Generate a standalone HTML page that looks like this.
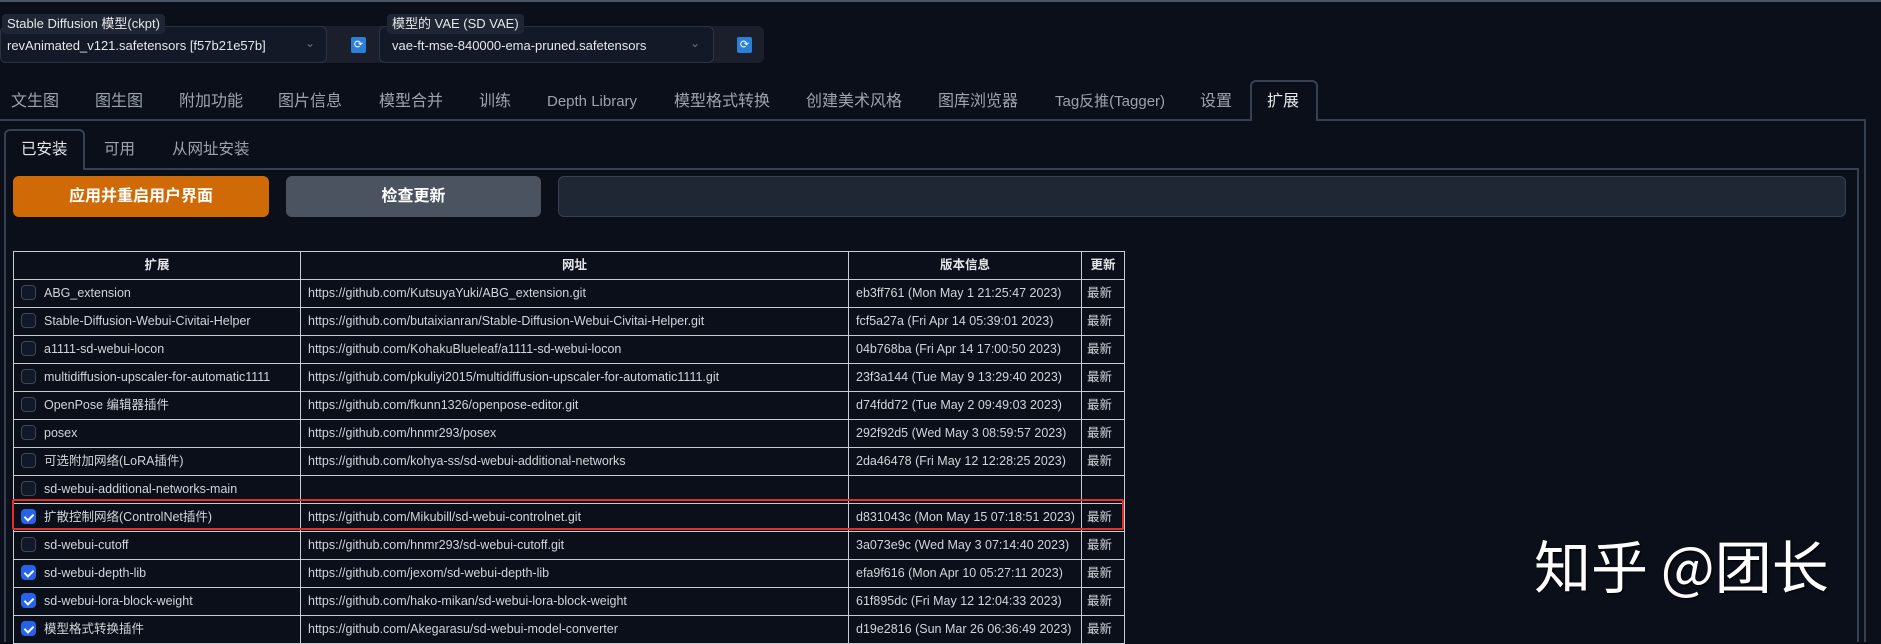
<!DOCTYPE html>
<html><head><meta charset="utf-8"><style>
*{box-sizing:border-box;margin:0;padding:0}
body{width:1881px;height:642px;overflow:hidden;background:#0b0f19;color:#d1d5db;font-family:"Liberation Sans","Noto Sans CJK SC",sans-serif;position:relative}
.a{position:absolute;white-space:nowrap}
.grp{left:0;top:26px;width:764px;height:37px;background:#1a1f2b;border-radius:6px}
.dd{top:26px;height:37px;background:#131926;border:1px solid #2c3444;border-radius:6px;font-size:13px;line-height:37px;padding-left:6px;color:#e5e7eb}
.lbl{font-size:13px;background:#1f2532;border-radius:4px;padding:0 5px;line-height:20px;color:#e5e7eb}
.ref{width:15px;height:16px;background:#2b7fd6;border-radius:2px;top:37px;color:#fff;font-size:11px;text-align:center;line-height:16px}
.chev{color:#6b7280;font-size:12px;top:36px}
.tab{top:91px;height:22px;line-height:22px;font-size:16px;color:#9ca3af}
.st{top:139px;height:22px;line-height:22px;font-size:15.5px;color:#9ca3af}
.btn{top:176px;height:41px;border-radius:6px;font-size:16px;font-weight:bold;color:#fff;text-align:center;line-height:41px}
table{position:absolute;left:13px;top:251px;width:1111px;border-collapse:collapse;table-layout:fixed;font-size:12.5px}
td,th{border:1px solid #c7cbd2;height:28px;padding:0 7px;white-space:nowrap;overflow:hidden;line-height:27px}
th{height:27.6px;font-weight:bold;text-align:center;color:#e5e7eb}
td{color:#d1d5db}
td.u{padding:0 5px}
.cb{display:inline-block;width:15px;height:15px;border:1px solid #3f4755;border-radius:4px;background:#111827;vertical-align:middle;margin-right:8px;position:relative;top:-1px}
.ck{background:#2563eb;border-color:#2563eb}
.ck::after{content:"";position:absolute;left:4px;top:2px;width:4px;height:7px;border:solid #fff;border-width:0 2px 2px 0;transform:rotate(45deg)}
</style></head><body>
<div class="a" style="left:0;top:0;width:1881px;height:2px;background:#4b5563"></div>
<div class="a grp"></div>
<div class="a dd" style="left:0;width:327px">revAnimated_v121.safetensors [f57b21e57b]</div>
<div class="a chev" style="left:305px">&#8964;</div>
<div class="a ref" style="left:351px">&#10227;</div>
<div class="a dd" style="left:379px;width:335px;padding-left:12px">vae-ft-mse-840000-ema-pruned.safetensors</div>
<div class="a chev" style="left:690px">&#8964;</div>
<div class="a ref" style="left:737px">&#10227;</div>
<div class="a lbl" style="left:2px;top:14px">Stable Diffusion 模型(ckpt)</div>
<div class="a lbl" style="left:387px;top:14px">模型的 VAE (SD VAE)</div>

<div class="a tab" style="left:11px">文生图</div>
<div class="a tab" style="left:95px">图生图</div>
<div class="a tab" style="left:179px">附加功能</div>
<div class="a tab" style="left:278px">图片信息</div>
<div class="a tab" style="left:379px">模型合并</div>
<div class="a tab" style="left:479px">训练</div>
<div class="a tab" style="left:547px;font-size:15px">Depth Library</div>
<div class="a tab" style="left:674px">模型格式转换</div>
<div class="a tab" style="left:806px">创建美术风格</div>
<div class="a tab" style="left:938px">图库浏览器</div>
<div class="a tab" style="left:1055px;font-size:15px">Tag反推(Tagger)</div>
<div class="a tab" style="left:1200px">设置</div>
<div class="a" style="left:0;top:119px;width:1866px;height:2px;background:#374151"></div>
<div class="a" style="left:1864px;top:119px;width:2px;height:523px;background:#374151"></div>
<div class="a" style="left:1250px;top:80px;width:68px;height:41px;border:2px solid #374151;border-bottom:none;border-radius:6px 6px 0 0;background:#0b0f19"></div>
<div class="a tab" style="left:1267px;color:#e5e7eb">扩展</div>

<div class="a" style="left:4px;top:168px;width:1855px;height:2px;background:#374151"></div>
<div class="a" style="left:4px;top:168px;width:2px;height:474px;background:#374151"></div>
<div class="a" style="left:1857px;top:168px;width:2px;height:474px;background:#374151"></div>
<div class="a" style="left:4px;top:129px;width:81px;height:41px;border:2px solid #374151;border-bottom:none;border-radius:6px 6px 0 0;background:#0b0f19"></div>
<div class="a st" style="left:21px;color:#e5e7eb">已安装</div>
<div class="a st" style="left:104px">可用</div>
<div class="a st" style="left:172px">从网址安装</div>

<div class="a btn" style="left:13px;width:256px;background:#cf6a07">应用并重启用户界面</div>
<div class="a btn" style="left:286px;width:255px;background:#4b5361">检查更新</div>
<div class="a" style="left:558px;top:176px;width:1288px;height:41px;background:#1f2734;border:1px solid #374151;border-radius:6px"></div>

<table>
<colgroup><col style="width:287px"><col style="width:548px"><col style="width:233px"><col style="width:43px"></colgroup>
<tr><th>扩展</th><th>网址</th><th>版本信息</th><th style="padding:0 4px">更新</th></tr>
<tr><td><span class="cb"></span>ABG_extension</td><td>https://github.com/KutsuyaYuki/ABG_extension.git</td><td>eb3ff761 (Mon May 1 21:25:47 2023)</td><td class="u">最新</td></tr>
<tr><td><span class="cb"></span>Stable-Diffusion-Webui-Civitai-Helper</td><td>https://github.com/butaixianran/Stable-Diffusion-Webui-Civitai-Helper.git</td><td>fcf5a27a (Fri Apr 14 05:39:01 2023)</td><td class="u">最新</td></tr>
<tr><td><span class="cb"></span>a1111-sd-webui-locon</td><td>https://github.com/KohakuBlueleaf/a1111-sd-webui-locon</td><td>04b768ba (Fri Apr 14 17:00:50 2023)</td><td class="u">最新</td></tr>
<tr><td><span class="cb"></span>multidiffusion-upscaler-for-automatic1111</td><td>https://github.com/pkuliyi2015/multidiffusion-upscaler-for-automatic1111.git</td><td>23f3a144 (Tue May 9 13:29:40 2023)</td><td class="u">最新</td></tr>
<tr><td><span class="cb"></span>OpenPose 编辑器插件</td><td>https://github.com/fkunn1326/openpose-editor.git</td><td>d74fdd72 (Tue May 2 09:49:03 2023)</td><td class="u">最新</td></tr>
<tr><td><span class="cb"></span>posex</td><td>https://github.com/hnmr293/posex</td><td>292f92d5 (Wed May 3 08:59:57 2023)</td><td class="u">最新</td></tr>
<tr><td><span class="cb"></span>可选附加网络(LoRA插件)</td><td>https://github.com/kohya-ss/sd-webui-additional-networks</td><td>2da46478 (Fri May 12 12:28:25 2023)</td><td class="u">最新</td></tr>
<tr><td><span class="cb"></span>sd-webui-additional-networks-main</td><td></td><td></td><td></td></tr>
<tr><td><span class="cb ck"></span>扩散控制网络(ControlNet插件)</td><td>https://github.com/Mikubill/sd-webui-controlnet.git</td><td>d831043c (Mon May 15 07:18:51 2023)</td><td class="u">最新</td></tr>
<tr><td><span class="cb"></span>sd-webui-cutoff</td><td>https://github.com/hnmr293/sd-webui-cutoff.git</td><td>3a073e9c (Wed May 3 07:14:40 2023)</td><td class="u">最新</td></tr>
<tr><td><span class="cb ck"></span>sd-webui-depth-lib</td><td>https://github.com/jexom/sd-webui-depth-lib</td><td>efa9f616 (Mon Apr 10 05:27:11 2023)</td><td class="u">最新</td></tr>
<tr><td><span class="cb ck"></span>sd-webui-lora-block-weight</td><td>https://github.com/hako-mikan/sd-webui-lora-block-weight</td><td>61f895dc (Fri May 12 12:04:33 2023)</td><td class="u">最新</td></tr>
<tr><td><span class="cb ck"></span>模型格式转换插件</td><td>https://github.com/Akegarasu/sd-webui-model-converter</td><td>d19e2816 (Sun Mar 26 06:36:49 2023)</td><td class="u">最新</td></tr>
</table>
<div class="a" style="left:12px;top:499px;width:1112px;height:31px;border:2.5px solid #e0302a;border-radius:2px"></div>
<div class="a" style="left:1534px;top:529px;font-size:57px;color:#fff;font-family:'Noto Sans CJK SC',sans-serif;line-height:70px;text-shadow:1px 1px 2px #000">知乎 @团长</div>
</body></html>
